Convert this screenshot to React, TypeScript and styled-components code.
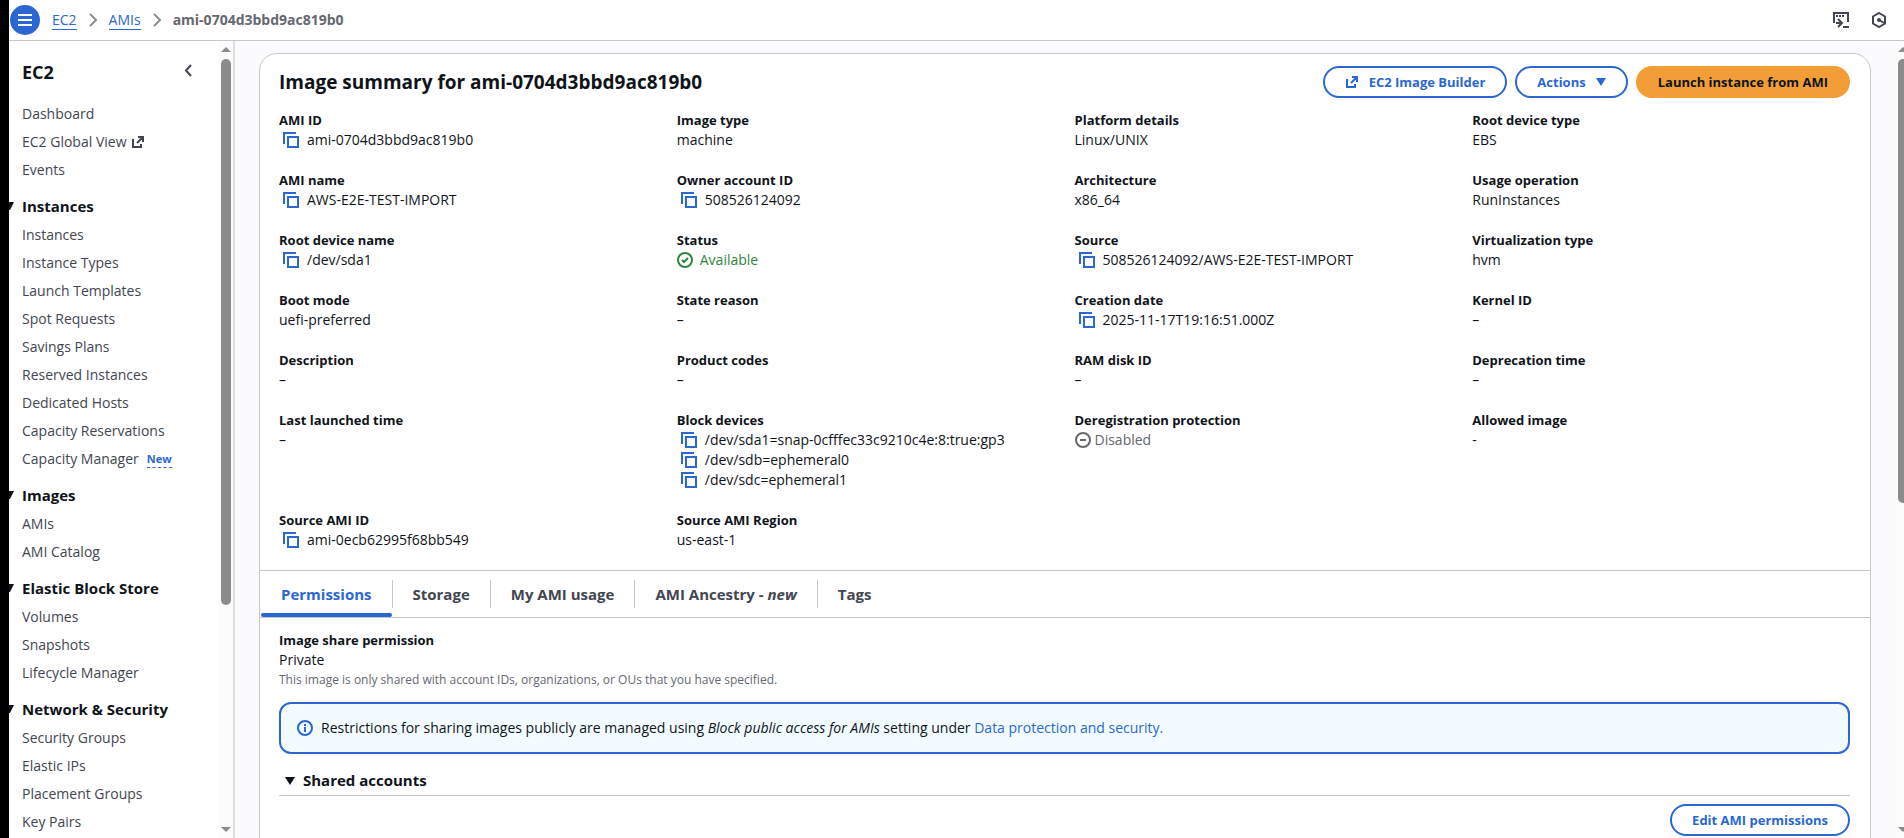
import React from "react";
import styled, { createGlobalStyle, css } from "styled-components";

const Global = createGlobalStyle`
  *, *::before, *::after { box-sizing: border-box; }
  html, body { margin: 0; padding: 0; }
  body {
    font-family: "Open Sans", "Noto Sans", sans-serif;
    font-size: 14px;
    line-height: 20px;
    color: #0f141a;
    background: #ffffff;
  }
  button { font: inherit; color: inherit; background: none; border: 0; padding: 0; cursor: pointer; }
  a { text-decoration: none; }
  svg { display: block; flex: none; }
  h1, h2, h3, p, ul, dl, dt, dd { margin: 0; padding: 0; }
  ul { list-style: none; }
`;

const BLUE = "#2b67d3";

const Page = styled.div`
  display: flex;
  height: 100vh;
  overflow: hidden;
`;
const Edge = styled.div`
  flex: none;
  width: 9px;
  background: #000000;
`;
const Shell = styled.div`
  flex: 1;
  min-width: 0;
  display: flex;
  flex-direction: column;
`;

const TopBar = styled.header`
  flex: none;
  display: flex;
  align-items: center;
  justify-content: space-between;
  height: 41px;
  padding: 0 17px 0 1px;
  border-bottom: 1px solid #c6c6cd;
`;
const TopGroup = styled.div`
  display: flex;
  align-items: center;
  gap: 12px;
`;
const MenuButton = styled.button`
  display: flex;
  align-items: center;
  justify-content: center;
  width: 30px;
  height: 30px;
  border-radius: 50%;
  background: ${BLUE};
`;
const Crumbs = styled.nav`
  display: flex;
  align-items: center;
  gap: 12px;
`;
const CrumbLink = styled.a`
  color: ${BLUE};
  line-height: 18px;
  border-bottom: 1px solid ${BLUE};
`;
const CrumbCurrent = styled.span`
  font-weight: 700;
  color: #656871;
`;
const Tools = styled.div`
  display: flex;
  align-items: center;
  gap: 22px;
`;

const Body = styled.div`
  flex: 1;
  min-height: 0;
  display: flex;
`;

const Side = styled.aside`
  flex: none;
  display: flex;
  width: 226px;
  border-right: 2px solid #dedee3;
`;
const SideNav = styled.nav`
  flex: 1;
  overflow: hidden;
`;
const SideHead = styled.div`
  display: flex;
  align-items: center;
  justify-content: space-between;
  padding: 19px 25px 20px 13px;
`;
const CollapseButton = styled.button`
  padding-bottom: 3px;
`;
const SideTitle = styled.h2`
  font-size: 18px;
  font-weight: 700;
  line-height: 24px;
`;
const SideGroup = styled.section`
  & + & { margin-top: 15px; }
`;
const GroupButton = styled.button`
  display: flex;
  align-items: center;
  gap: 8px;
  margin-bottom: 8px;
  font-size: 15px;
  font-weight: 700;
  line-height: 22px;
`;
const LinkList = styled.ul`
  display: flex;
  flex-direction: column;
  gap: 8px;
  padding-left: 13px;
`;
const LinkRow = styled.li`
  display: flex;
  align-items: center;
  gap: 8px;
  white-space: nowrap;
`;
const SideLink = styled.a`
  display: flex;
  align-items: center;
  gap: 5px;
  color: #424650;
`;
const NewTag = styled.button`
  font-size: 11px;
  font-weight: 700;
  line-height: 16px;
  color: ${BLUE};
  border-bottom: 1px dashed ${BLUE};
`;

const Track = styled.div<{ $width: number }>`
  flex: none;
  display: flex;
  flex-direction: column;
  width: ${(p) => p.$width}px;
  padding: 6px 0 6px 3px;
  background: #fcfcfc;
  overflow: hidden;
`;
const Thumb = styled.div<{ $share: string }>`
  flex: 0 0 ${(p) => p.$share};
  width: 10px;
  margin-top: 7px;
  border-radius: 5px;
  background: #8b8b8b;
`;
const Spacer = styled.div`
  flex: 1;
`;

const Main = styled.main`
  flex: 1;
  min-width: 0;
  display: flex;
  background: #fbfbfe;
`;
const Content = styled.div`
  flex: 1;
  min-width: 0;
  padding: 12px 24px 0;
  overflow: hidden;
`;
const Card = styled.section`
  min-height: 100%;
  height: max-content;
  padding-bottom: 20px;
  border: 1px solid #c6c6cd;
  border-radius: 18px 18px 0 0;
  background: #ffffff;
`;
const CardHead = styled.div`
  display: flex;
  align-items: center;
  justify-content: space-between;
  padding: 12px 20px 12px 19px;
`;
const CardTitle = styled.h1`
  font-size: 19px;
  font-weight: 700;
  line-height: 24px;
`;
const Actions = styled.div`
  display: flex;
  gap: 8px;
`;
const PillButton = styled.button<{ $primary?: boolean }>`
  display: flex;
  align-items: center;
  gap: 10px;
  height: 32px;
  padding: 0 20px;
  border: 2px solid ${BLUE};
  border-radius: 16px;
  font-size: 13px;
  font-weight: 700;
  color: ${BLUE};
  background: #ffffff;
  ${(p) =>
    p.$primary &&
    css`
      color: #0f141a;
      border-color: #f29d38;
      background: #f29d38;
    `}
`;

const Details = styled.dl`
  display: grid;
  grid-template-columns: repeat(4, minmax(0, 1fr));
  gap: 20px;
  padding: 0 20px 20px 19px;
`;
const Pair = styled.div``;
const Term = styled.dt`
  font-size: 13px;
  font-weight: 700;
`;
const Value = styled.dd<{ $tone?: string; $gap?: number }>`
  display: flex;
  align-items: center;
  gap: ${(p) => p.$gap ?? 4}px;
  color: ${(p) => p.$tone ?? "#0f141a"};
`;
const CopyButton = styled.button`
  width: 24px;
  padding-left: 4px;
`;

const TabBar = styled.div`
  display: flex;
  align-items: center;
  height: 48px;
  padding-left: 1px;
  border-top: 1px solid #c6c6cd;
  border-bottom: 1px solid #c6c6cd;
`;
const Tab = styled.button<{ $active?: boolean }>`
  align-self: stretch;
  display: flex;
  flex-direction: column;
  font-size: 15px;
  font-weight: 700;
  color: ${(p) => (p.$active ? BLUE : "#424650")};
  &::after {
    content: "";
    width: 100%;
    height: 4px;
    border-radius: 2px;
    background: ${(p) => (p.$active ? BLUE : "transparent")};
  }
`;
const TabLabel = styled.span`
  flex: 1;
  padding: 13px 20px 0;
`;
const TabDivider = styled.span`
  width: 1px;
  height: 28px;
  background: #c6c6cd;
`;

const Panel = styled.div`
  padding: 12px 20px 0 19px;
`;
const Hint = styled.p`
  font-size: 12px;
  color: #656871;
`;
const Alert = styled.div`
  display: flex;
  align-items: center;
  gap: 8px;
  height: 52px;
  margin-top: 12px;
  padding: 0 16px;
  border: 2px solid ${BLUE};
  border-radius: 12px;
  background: #f2fbff;
`;
const AlertLink = styled.a`
  color: ${BLUE};
`;
const Expander = styled.button`
  display: flex;
  align-items: center;
  gap: 8px;
  width: 100%;
  margin: 15px 0 8px;
  padding: 0 6px 3px;
  border-bottom: 1px solid #c6c6cd;
  font-size: 15px;
  font-weight: 700;
  line-height: 23px;
`;
const PanelActions = styled.div`
  display: flex;
  justify-content: flex-end;
`;

const ExternalIcon = () => (
  <svg width="14" height="14" viewBox="0 0 14 14" fill="none" stroke="currentColor" strokeWidth="2">
    <path d="M7 2h5v5M12 2L6 8M2 4v8h8V9" />
  </svg>
);
const CopyIcon = () => (
  <svg width="16" height="16" viewBox="0 0 16 16" fill="none" stroke={BLUE} strokeWidth="2">
    <path d="M1 12V1h12" />
    <path d="M5 5h10v10H5z" />
  </svg>
);
const Caret = () => (
  <svg width="10" height="8" viewBox="0 0 10 8" fill="currentColor">
    <path d="M0 0h10L5 8z" />
  </svg>
);
const CrumbChevron = () => (
  <svg width="8" height="14" viewBox="0 0 8 14" fill="none" stroke="#8c8c94" strokeWidth="2">
    <path d="M1 1l6 6-6 6" />
  </svg>
);

const Scrollbar = ({ width, share }: { width: number; share: string }) => (
  <Track $width={width} aria-hidden="true">
    <svg width="10" height="5" viewBox="0 0 10 5" fill="#8b8b8b">
      <path d="M5 0l5 5H0z" />
    </svg>
    <Thumb $share={share} />
    <Spacer />
    <svg width="10" height="5" viewBox="0 0 10 5" fill="#8b8b8b">
      <path d="M0 0h10L5 5z" />
    </svg>
  </Track>
);

type NavItem = { label: string; external?: boolean; isNew?: boolean };
const groups: { title?: string; items: NavItem[] }[] = [
  { items: [{ label: "Dashboard" }, { label: "EC2 Global View", external: true }, { label: "Events" }] },
  {
    title: "Instances",
    items: [
      { label: "Instances" },
      { label: "Instance Types" },
      { label: "Launch Templates" },
      { label: "Spot Requests" },
      { label: "Savings Plans" },
      { label: "Reserved Instances" },
      { label: "Dedicated Hosts" },
      { label: "Capacity Reservations" },
      { label: "Capacity Manager", isNew: true },
    ],
  },
  { title: "Images", items: [{ label: "AMIs" }, { label: "AMI Catalog" }] },
  { title: "Elastic Block Store", items: [{ label: "Volumes" }, { label: "Snapshots" }, { label: "Lifecycle Manager" }] },
  {
    title: "Network & Security",
    items: [{ label: "Security Groups" }, { label: "Elastic IPs" }, { label: "Placement Groups" }, { label: "Key Pairs" }],
  },
];

type Detail = { term: string; values: string[]; kind?: "copy" | "available" | "disabled" };
const details: Detail[] = [
  { term: "AMI ID", values: ["ami-0704d3bbd9ac819b0"], kind: "copy" },
  { term: "Image type", values: ["machine"] },
  { term: "Platform details", values: ["Linux/UNIX"] },
  { term: "Root device type", values: ["EBS"] },
  { term: "AMI name", values: ["AWS-E2E-TEST-IMPORT"], kind: "copy" },
  { term: "Owner account ID", values: ["508526124092"], kind: "copy" },
  { term: "Architecture", values: ["x86_64"] },
  { term: "Usage operation", values: ["RunInstances"] },
  { term: "Root device name", values: ["/dev/sda1"], kind: "copy" },
  { term: "Status", values: ["Available"], kind: "available" },
  { term: "Source", values: ["508526124092/AWS-E2E-TEST-IMPORT"], kind: "copy" },
  { term: "Virtualization type", values: ["hvm"] },
  { term: "Boot mode", values: ["uefi-preferred"] },
  { term: "State reason", values: ["–"] },
  { term: "Creation date", values: ["2025-11-17T19:16:51.000Z"], kind: "copy" },
  { term: "Kernel ID", values: ["–"] },
  { term: "Description", values: ["–"] },
  { term: "Product codes", values: ["–"] },
  { term: "RAM disk ID", values: ["–"] },
  { term: "Deprecation time", values: ["–"] },
  { term: "Last launched time", values: ["–"] },
  {
    term: "Block devices",
    values: ["/dev/sda1=snap-0cfffec33c9210c4e:8:true:gp3", "/dev/sdb=ephemeral0", "/dev/sdc=ephemeral1"],
    kind: "copy",
  },
  { term: "Deregistration protection", values: ["Disabled"], kind: "disabled" },
  { term: "Allowed image", values: ["-"] },
  { term: "Source AMI ID", values: ["ami-0ecb62995f68bb549"], kind: "copy" },
  { term: "Source AMI Region", values: ["us-east-1"] },
];

const DetailValue = ({ kind, text }: { kind?: Detail["kind"]; text: string }) => {
  if (kind === "copy") {
    return (
      <Value>
        <CopyButton aria-label={`Copy ${text}`}>
          <CopyIcon />
        </CopyButton>
        {text}
      </Value>
    );
  }
  if (kind === "available") {
    return (
      <Value $tone="#2f8540" $gap={7}>
        <svg width="16" height="16" viewBox="0 0 16 16" fill="none" stroke="currentColor" strokeWidth="2">
          <circle cx="8" cy="8" r="7" />
          <path d="M5 8l2 2 4-4" />
        </svg>
        {text}
      </Value>
    );
  }
  if (kind === "disabled") {
    return (
      <Value $tone="#656871">
        <svg width="16" height="16" viewBox="0 0 16 16" fill="none" stroke="currentColor" strokeWidth="2">
          <circle cx="8" cy="8" r="7" />
          <path d="M5 8h6" />
        </svg>
        {text}
      </Value>
    );
  }
  return <Value>{text}</Value>;
};

const tabs: { label: React.ReactNode; active?: boolean }[] = [
  { label: "Permissions", active: true },
  { label: "Storage" },
  { label: "My AMI usage" },
  {
    label: (
      <>
        AMI Ancestry - <i>new</i>
      </>
    ),
  },
  { label: "Tags" },
];

export default function App() {
  return (
    <Page>
      <Global />
      <Edge />
      <Shell>
        <TopBar>
          <TopGroup>
            <MenuButton aria-label="Toggle navigation">
              <svg width="14" height="12" viewBox="0 0 14 12" stroke="#ffffff" strokeWidth="2">
                <path d="M0 1h14M0 6h14M0 11h14" />
              </svg>
            </MenuButton>
            <Crumbs aria-label="Breadcrumbs">
              <CrumbLink href="#ec2">EC2</CrumbLink>
              <CrumbChevron />
              <CrumbLink href="#amis">AMIs</CrumbLink>
              <CrumbChevron />
              <CrumbCurrent>ami-0704d3bbd9ac819b0</CrumbCurrent>
            </Crumbs>
          </TopGroup>
          <Tools>
            <button aria-label="CloudShell">
              <svg width="16" height="16" viewBox="0 0 16 16" fill="none" stroke="#424650" strokeWidth="2">
                <path d="M1 11V1h14v9" />
                <path d="M3 4h2M6 4h2M9 4h2" />
                <path d="M3 11h5M5 7l4 4-4 4M10 15h6" />
              </svg>
            </button>
            <button aria-label="Settings">
              <svg width="16" height="16" viewBox="0 0 16 16" fill="none" stroke="#424650" strokeWidth="2">
                <path d="M8 1l6 3.500v7L8 15l-6-3.500v-7z" />
                <path d="M8 8l5 3" />
                <circle cx="8" cy="8" r="2" fill="#424650" stroke="none" />
              </svg>
            </button>
          </Tools>
        </TopBar>
        <Body>
          <Side>
            <SideNav aria-label="EC2">
              <SideHead>
                <SideTitle>EC2</SideTitle>
                <CollapseButton aria-label="Close navigation">
                  <svg width="9" height="13" viewBox="0 0 9 13" fill="none" stroke="#424650" strokeWidth="2">
                    <path d="M7 1L2 6.500l5 5.500" />
                  </svg>
                </CollapseButton>
              </SideHead>
              {groups.map((group, i) => (
                <SideGroup key={i}>
                  {group.title && (
                    <GroupButton aria-expanded="true">
                      <svg width="5" height="8" viewBox="0 0 5 8" fill="currentColor">
                        <path d="M0 0h5L1 8H0z" />
                      </svg>
                      {group.title}
                    </GroupButton>
                  )}
                  <LinkList>
                    {group.items.map((item) => (
                      <LinkRow key={item.label}>
                        <SideLink href="#nav">
                          {item.label}
                          {item.external && <ExternalIcon />}
                        </SideLink>
                        {item.isNew && <NewTag>New</NewTag>}
                      </LinkRow>
                    ))}
                  </LinkList>
                </SideGroup>
              ))}
            </SideNav>
            <Scrollbar width={15} share="69.5%" />
          </Side>
          <Main>
            <Content>
              <Card>
                <CardHead>
                  <CardTitle>Image summary for ami-0704d3bbd9ac819b0</CardTitle>
                  <Actions>
                    <PillButton>
                      <ExternalIcon />
                      EC2 Image Builder
                    </PillButton>
                    <PillButton>
                      Actions
                      <Caret />
                    </PillButton>
                    <PillButton $primary>Launch instance from AMI</PillButton>
                  </Actions>
                </CardHead>
                <Details>
                  {details.map((d) => (
                    <Pair key={d.term}>
                      <Term>{d.term}</Term>
                      {d.values.map((v) => (
                        <DetailValue key={v} kind={d.kind} text={v} />
                      ))}
                    </Pair>
                  ))}
                </Details>
                <TabBar role="tablist">
                  {tabs.map((tab, i) => (
                    <React.Fragment key={i}>
                      {i > 0 && <TabDivider />}
                      <Tab role="tab" aria-selected={!!tab.active} $active={tab.active}>
                        <TabLabel>{tab.label}</TabLabel>
                      </Tab>
                    </React.Fragment>
                  ))}
                </TabBar>
                <Panel>
                  <dl>
                    <Term>Image share permission</Term>
                    <Value>Private</Value>
                  </dl>
                  <Hint>This image is only shared with account IDs, organizations, or OUs that you have specified.</Hint>
                  <Alert role="status">
                    <svg width="16" height="16" viewBox="0 0 16 16" fill="none" stroke={BLUE} strokeWidth="2">
                      <circle cx="8" cy="8" r="7" />
                      <path d="M8 7v5M8 4v2" />
                    </svg>
                    <p>
                      Restrictions for sharing images publicly are managed using <i>Block public access for AMIs</i> setting
                      under <AlertLink href="#security">Data protection and security.</AlertLink>
                    </p>
                  </Alert>
                  <Expander aria-expanded="true">
                    <Caret />
                    Shared accounts
                  </Expander>
                  <PanelActions>
                    <PillButton>Edit AMI permissions</PillButton>
                  </PanelActions>
                </Panel>
              </Card>
            </Content>
            <Scrollbar width={9} share="56.5%" />
          </Main>
        </Body>
      </Shell>
    </Page>
  );
}
